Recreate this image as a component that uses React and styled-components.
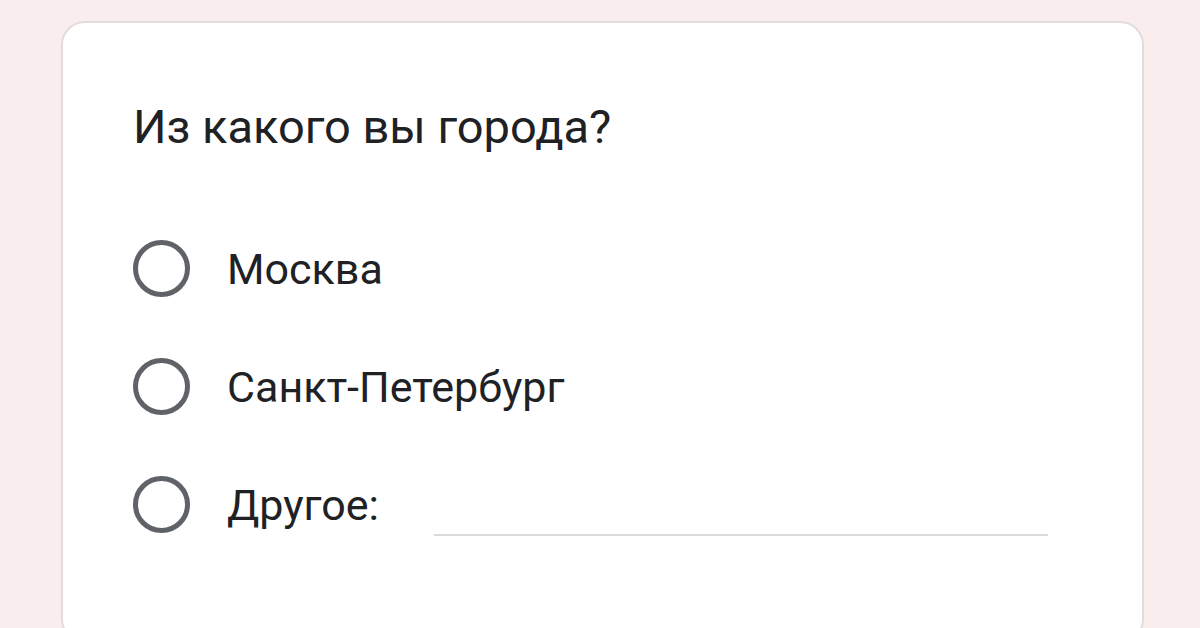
import React from "react";
import styled, { createGlobalStyle } from "styled-components";

const GlobalStyle = createGlobalStyle`
  html, body {
    margin: 0;
    padding: 0;
    background: #f9eded;
    font-family: Roboto, "Noto Sans", Arial, sans-serif;
  }
`;

const Page = styled.div`
  width: 1200px;
  height: 628px;
  overflow: hidden;
  padding: 21px 0 0 61px;
  box-sizing: border-box;
`;

const Card = styled.div`
  width: 1083px;
  height: 622px;
  box-sizing: border-box;
  background: #ffffff;
  border: 2px solid #e2dcdc;
  border-radius: 24px;
  padding: 76px 0 0 70px;
`;

const Title = styled.div`
  font-size: 47px;
  line-height: 56px;
  color: #202124;
  margin-bottom: 85px;
`;

const Options = styled.div`
  display: flex;
  flex-direction: column;
  gap: 61px;
`;

const Option = styled.label`
  display: flex;
  align-items: center;
  height: 57px;
`;

const Radio = styled.span`
  width: 57px;
  height: 57px;
  box-sizing: border-box;
  border: 5px solid #5f6368;
  border-radius: 50%;
  flex-shrink: 0;
`;

const Label = styled.span`
  font-size: 43px;
  line-height: 50px;
  color: #202124;
  margin-left: 37px;
`;

const OtherInput = styled.span`
  display: block;
  width: 614px;
  height: 2px;
  background: #dadada;
  margin-left: 55px;
  align-self: flex-end;
  margin-bottom: -3px;
`;

const options = ["Москва", "Санкт-Петербург"];

export default function App() {
  return (
    <>
      <GlobalStyle />
      <Page>
        <Card>
          <Title>Из какого вы города?</Title>
          <Options>
            {options.map((o) => (
              <Option key={o}>
                <Radio />
                <Label>{o}</Label>
              </Option>
            ))}
            <Option>
              <Radio />
              <Label>Другое:</Label>
              <OtherInput />
            </Option>
          </Options>
        </Card>
      </Page>
    </>
  );
}
